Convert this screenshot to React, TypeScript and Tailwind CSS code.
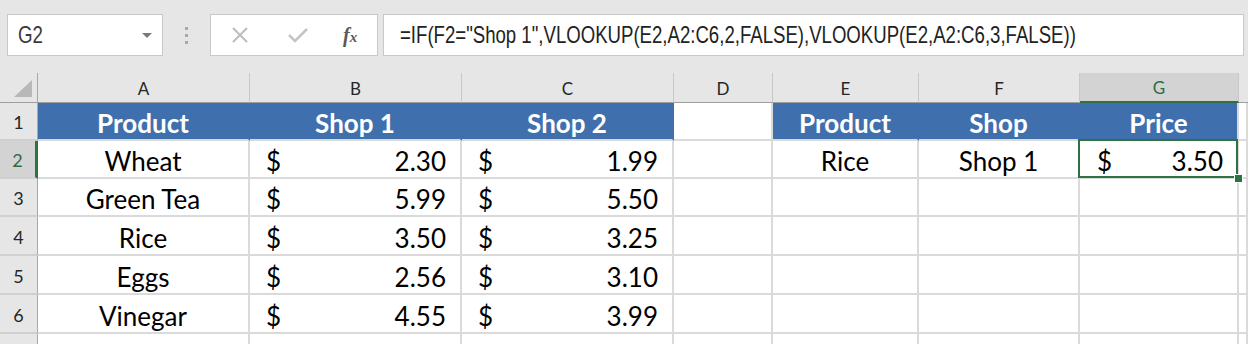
const rows = [
  { n: 2, product: 'Wheat', s1: '2.30', s2: '1.99' },
  { n: 3, product: 'Green Tea', s1: '5.99', s2: '5.50' },
  { n: 4, product: 'Rice', s1: '3.50', s2: '3.25' },
  { n: 5, product: 'Eggs', s1: '2.56', s2: '3.10' },
  { n: 6, product: 'Vinegar', s1: '4.55', s2: '3.99' },
];

const cell = 'bg-white border-r-2 border-b-2 border-[#dadada] flex items-center pt-[5px]';
const blue = 'bg-[#3f70ad] border-b-2 border-b-[#dadada] border-r-2 border-r-[#3f70ad] flex items-center justify-center pt-[5px] text-white font-bold';
const rowHead = 'bg-[#e6e6e6] border-b-2 border-b-[#d0d0d0] border-r border-r-[#a8a8a8] flex items-center justify-center pt-[3px] text-[18px] text-[#262626]';

const Money = ({ value }: { value: string }) => (
  <div className={`${cell} justify-between pl-[16px] pr-[14px]`}>
    <span>$</span>
    <span>{value}</span>
  </div>
);

export default function App() {
  return (
    <div className="w-[1248px] h-[344px] overflow-hidden bg-[#e6e6e6] flex flex-col font-['Lato',sans-serif]">
      {/* formula bar */}
      <div className="h-[73px] flex items-start pt-[14px] pl-[7px] font-['Liberation_Sans',Arial,sans-serif]">
        <div className="w-[156px] h-[42px] bg-white border border-[#c8c8c8] flex items-center justify-between pl-[10px] pr-[10px]">
          <span className="inline-block origin-left scale-x-[0.78] text-[24px] text-[#3a3a3a]">G2</span>
          <span className="w-0 h-0 border-l-[5px] border-r-[5px] border-t-[5px] border-l-transparent border-r-transparent border-t-[#7a7a7a]" />
        </div>
        <div className="w-[47px] h-[42px] flex flex-col items-center justify-center gap-[4px]">
          <span className="w-[3px] h-[3px] bg-[#a8a8a8]" />
          <span className="w-[3px] h-[3px] bg-[#a8a8a8]" />
          <span className="w-[3px] h-[3px] bg-[#a8a8a8]" />
        </div>
        <div className="w-[168px] h-[42px] bg-white border border-[#c8c8c8] flex items-center">
          <svg className="ml-[20px]" width="18" height="18" viewBox="0 0 18 18">
            <path d="M2 2 L16 16 M16 2 L2 16" stroke="#bdbdbd" strokeWidth="2" fill="none" />
          </svg>
          <svg className="ml-[38px]" width="22" height="18" viewBox="0 0 22 18">
            <path d="M2 9 L8 15 L20 3" stroke="#c4c4c4" strokeWidth="2.5" fill="none" />
          </svg>
          <span className="ml-[34px] font-['Liberation_Serif',serif] italic font-bold text-[20px] text-[#5a5a5a] leading-none">
            f<span className="text-[15px]">x</span>
          </span>
        </div>
        <div className="ml-[5px] w-[861px] h-[42px] bg-white border border-[#c8c8c8] flex items-center pl-[16px] overflow-hidden whitespace-nowrap">
          <span className="inline-block origin-left scale-x-[0.775] text-[24px] text-[#222]">
            =IF(F2="Shop 1",VLOOKUP(E2,A2:C6,2,FALSE),VLOOKUP(E2,A2:C6,3,FALSE))
          </span>
        </div>
      </div>

      {/* sheet */}
      <div className="grid grid-cols-[38px_212px_212px_212px_99px_146px_161px_159px_1fr] grid-rows-[30px_38px_38px_38px_39px_39px_39px_1fr] flex-1 text-[26px] text-black">
        {/* column headers */}
        <div className="border-r border-r-[#a8a8a8] border-b border-b-[#9e9e9e] flex items-end justify-end pr-[5px] pb-[5px]">
          <svg width="18" height="17" viewBox="0 0 18 17">
            <path d="M18 0 L18 17 L0 17 Z" fill="#b8b8b8" />
          </svg>
        </div>
        {['A', 'B', 'C', 'D', 'E', 'F'].map((c) => (
          <div key={c} className="border-r border-r-[#c8c8c8] border-b border-b-[#9e9e9e] flex items-center justify-center pt-[2px] text-[17px] text-[#262626]">
            {c}
          </div>
        ))}
        <div className="bg-[#d3d3d3] border-r border-r-[#c8c8c8] border-b-2 border-b-[#2e7243] flex items-center justify-center pt-[2px] text-[17px] text-[#2e6b45]">
          G
        </div>
        <div className="border-b border-b-[#9e9e9e]" />

        {/* row 1 */}
        <div className={rowHead}>1</div>
        <div className={blue}>Product</div>
        <div className={blue}>Shop 1</div>
        <div className={blue}>Shop 2</div>
        <div className={`${cell} border-r-[#dadada]`} />
        <div className={blue}>Product</div>
        <div className={blue}>Shop</div>
        <div className={`${blue} border-r-[#dadada]`}>Price</div>
        <div className={cell} />

        {rows.map((r) => (
          <div key={r.n} className="contents">
            {r.n === 2 ? (
              <div className="bg-[#d3d3d3] border-b-2 border-b-[#d0d0d0] border-r-[3px] border-r-[#2e7243] flex items-center justify-center pt-[3px] text-[18px] text-[#2e6b45]">
                2
              </div>
            ) : (
              <div className={rowHead}>{r.n}</div>
            )}
            <div className={`${cell} justify-center`}>{r.product}</div>
            <Money value={r.s1} />
            <Money value={r.s2} />
            <div className={cell} />
            <div className={`${cell} justify-center`}>{r.n === 2 ? 'Rice' : ''}</div>
            <div className={`${cell} justify-center`}>{r.n === 2 ? 'Shop 1' : ''}</div>
            {r.n === 2 ? (
              <div className={`${cell} relative justify-between pl-[17px] pr-[14px]`}>
                <span>$</span>
                <span>3.50</span>
                <div className="absolute -left-[2px] -top-[2px] -right-[1px] -bottom-[1px] border-2 border-[#2e7243]" />
                <div className="absolute -right-[6px] -bottom-[6px] w-[9px] h-[9px] bg-[#2e7243] border border-white" />
              </div>
            ) : (
              <div className={cell} />
            )}
            <div className={cell} />
          </div>
        ))}

        {/* row 7, cut off */}
        <div className="bg-[#e6e6e6] border-r border-r-[#a8a8a8]" />
        {[0, 1, 2, 3, 4, 5, 6, 7].map((i) => (
          <div key={i} className="bg-white border-r-2 border-[#dadada]" />
        ))}
      </div>
    </div>
  );
}
